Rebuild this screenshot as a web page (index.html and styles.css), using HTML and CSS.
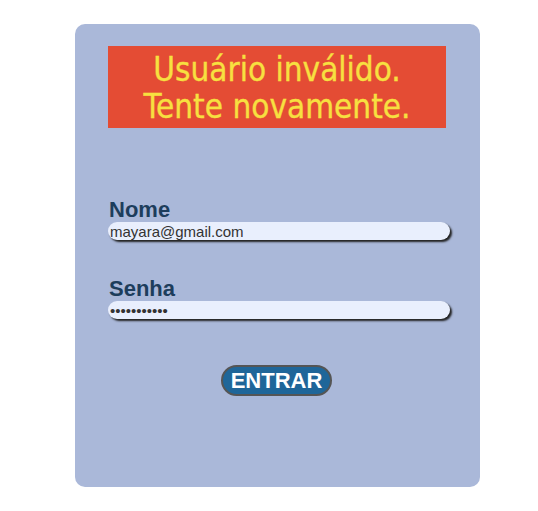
FILE: index.html
```html
<!DOCTYPE html>
<html lang="pt-BR">
<head>
<meta charset="utf-8">
<link rel="stylesheet" href="styles.css">
</head>
<body>
<div class="page">
  <form class="card">
    <div class="erro">Usuário inválido.<br>Tente novamente.</div>
    <label class="rotulo" for="nome">Nome</label>
    <input class="campo" id="nome" type="text" value="mayara@gmail.com">
    <label class="rotulo senha" for="senha">Senha</label>
    <input class="campo" id="senha" type="password" value="12345678901">
    <div class="acoes"><button class="botao" type="button">ENTRAR</button></div>
  </form>
</div>
</body>
</html>
```
FILE: styles.css
```css
html, body { margin: 0; padding: 0; background: #fff; }
.page { padding: 24px 0 0 75px; }
.card {
  width: 405px;
  height: 463px;
  box-sizing: border-box;
  background: #aab8d9;
  border-radius: 10px;
  padding: 22px 30px 0 33px;
  display: flex;
  flex-direction: column;
  align-items: flex-start;
}
.erro {
  width: 338px;
  height: 82px;
  box-sizing: border-box;
  background: #e44c34;
  color: #f7e040;
  font-family: "DejaVu Sans Condensed", "DejaVu Sans", sans-serif;
  font-size: 33px;
  line-height: 37px;
  text-align: center;
  padding-top: 5px;
  -webkit-text-stroke: 0.3px #f7e040;
}
.rotulo {
  font-family: "Liberation Sans", Arial, sans-serif;
  font-weight: bold;
  font-size: 22px;
  color: #1d3d5c;
  line-height: 24px;
  margin-top: 70px;
  margin-left: 1px;
}
.rotulo.senha { margin-top: 37px; }
.campo {
  width: 342px;
  height: 18px;
  box-sizing: border-box;
  border: none;
  border-radius: 9px;
  background: #e9effd;
  box-shadow: 2px 2px 2px #222;
  padding: 0 2px;
  margin: 0;
  font-family: "Liberation Sans", Arial, sans-serif;
  font-size: 15px;
  color: #333;
  outline: none;
}
.acoes {
  align-self: stretch;
  display: flex;
  justify-content: flex-start;
  padding-left: 113px;
  margin-top: 46px;
}
.botao {
  width: 111px;
  height: 31px;
  box-sizing: border-box;
  border: 2px solid #555;
  border-radius: 16px;
  background: #1f6699;
  color: #fff;
  font-family: "Liberation Sans", Arial, sans-serif;
  font-weight: bold;
  font-size: 22px;
  padding: 0;
  line-height: 26px;
}
```
